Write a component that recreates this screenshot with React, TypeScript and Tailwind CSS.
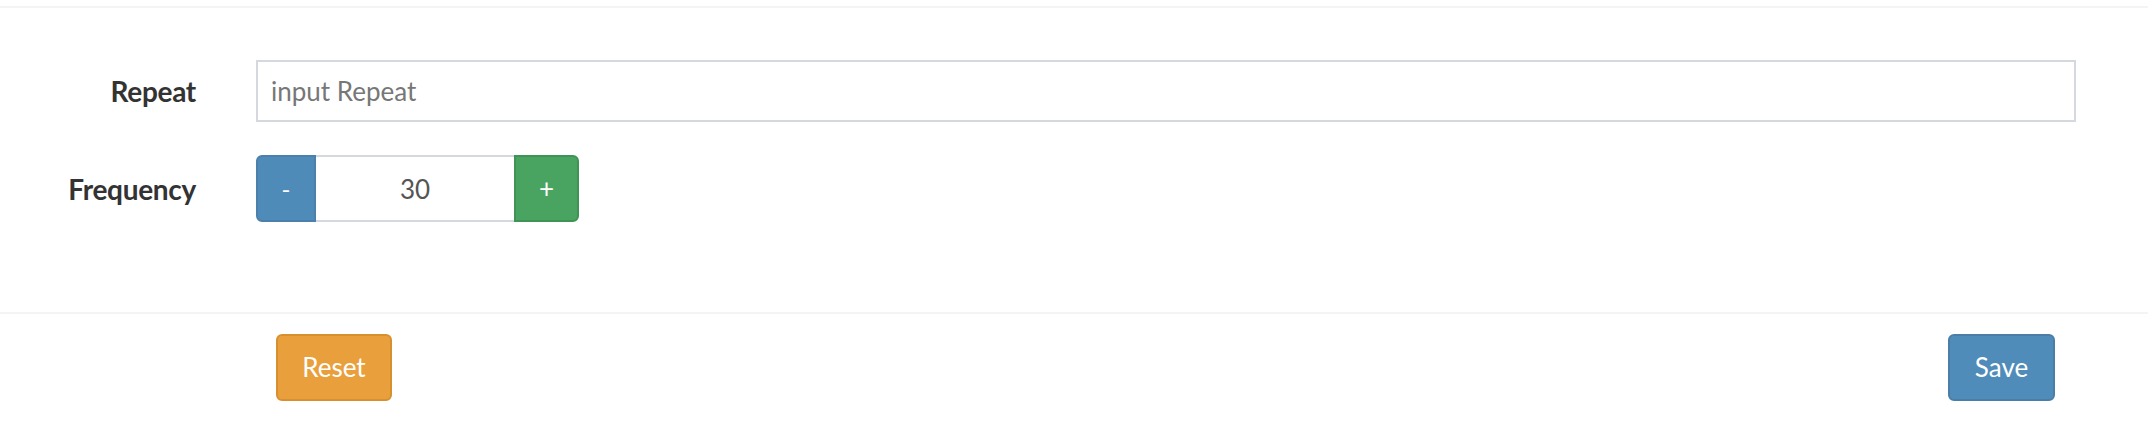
import React from 'react';

const font = { fontFamily: '"Lato", "Open Sans", sans-serif' };

export default function App() {
  return (
    <div className="w-[2148px] h-[432px] bg-white text-[#333]" style={font}>
      {/* form body */}
      <div className="mt-[6px] border-t-2 border-[#f4f4f4] pt-[52px] pb-[90px]">
        <div className="flex items-center h-[62px]">
          <label className="w-[196px] text-right font-bold text-[28px] leading-none tracking-[-0.3px]">Repeat</label>
          <input
            type="text"
            placeholder="input Repeat"
            className="ml-[60px] w-[1820px] h-[62px] border-2 border-[#d5d8de] px-[13px] text-[26px] text-[#555] placeholder:text-[#777] outline-none"
          />
        </div>
        <div className="flex items-center h-[67px] mt-[33px]">
          <label className="w-[196px] text-right font-bold text-[28px] leading-none tracking-[-0.3px]">Frequency</label>
          <div className="ml-[60px] flex h-[67px]">
            <button className="w-[60px] h-full bg-[#4f8bb9] border-2 border-[#4a80ab] rounded-l-[6px] text-white text-[24px]">
              -
            </button>
            <input
              type="text"
              defaultValue="30"
              className="w-[198px] h-full border-y-2 border-[#d5d8de] text-center text-[26px] text-[#555] outline-none"
            />
            <button className="w-[65px] h-full bg-[#4aa461] border-2 border-[#3f9455] rounded-r-[6px] text-white text-[26px]">
              +
            </button>
          </div>
        </div>
      </div>

      {/* footer */}
      <div className="border-t-2 border-[#f4f4f4] pt-[20px] pl-[276px] pr-[93px] flex justify-between">
        <button className="w-[116px] h-[67px] bg-[#e9a03c] border-2 border-[#d7902f] rounded-[6px] text-white text-[26px]">
          Reset
        </button>
        <button className="w-[107px] h-[67px] bg-[#508cb9] border-2 border-[#4a7ea8] rounded-[6px] text-white text-[26px]">
          Save
        </button>
      </div>
    </div>
  );
}
